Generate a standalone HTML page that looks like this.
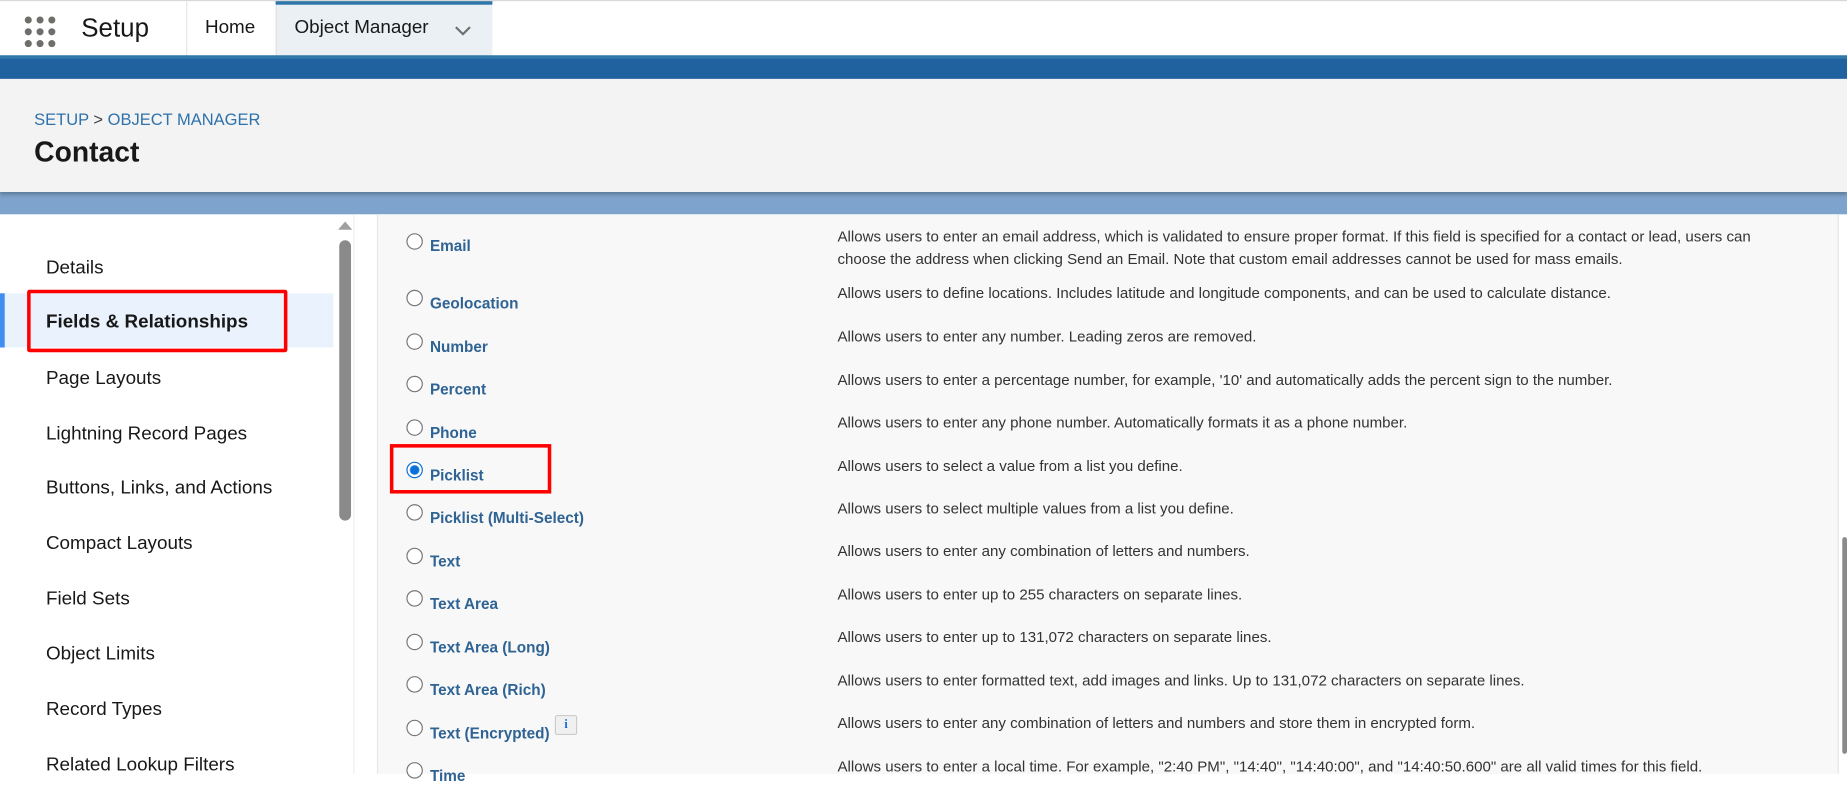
<!DOCTYPE html>
<html><head><meta charset="utf-8"><style>
html,body{margin:0;padding:0;width:1847px;height:774px;overflow:hidden;background:#fff}
#w{position:absolute;left:0;top:0;width:1568px;height:657px;transform:scale(1.17793);transform-origin:0 0;font-family:"Liberation Sans",Arial,sans-serif}
.a{position:absolute}
.nav{left:0;top:0;width:1568px;height:47px;background:#fff;border-top:1px solid #d8d8d8;box-sizing:border-box}
.dot{position:absolute;width:6px;height:6px;border-radius:50%;background:#706e6b}
.side{font-size:16px;color:#181818;left:39px;white-space:nowrap}
.lab{left:365px;font-size:13px;font-weight:bold;color:#2e6394;white-space:nowrap}
.desc{left:711px;font-size:12.8px;color:#333;line-height:19px;white-space:nowrap}
.rad{left:345px;width:12px;height:12px;border:1px solid #767676;border-radius:50%;background:#fff}
</style></head><body><div id="w">
<div class="a nav"></div>
<div class="dot" style="left:21px;top:14px"></div><div class="dot" style="left:31px;top:14px"></div><div class="dot" style="left:41px;top:14px"></div>
<div class="dot" style="left:21px;top:24px"></div><div class="dot" style="left:31px;top:24px"></div><div class="dot" style="left:41px;top:24px"></div>
<div class="dot" style="left:21px;top:34px"></div><div class="dot" style="left:31px;top:34px"></div><div class="dot" style="left:41px;top:34px"></div>
<div class="a" style="left:69px;top:11px;font-size:22px;color:#181818">Setup</div>
<div class="a" style="left:158px;top:1px;width:1px;height:46px;background:#e5e5e5"></div>
<div class="a" style="left:174px;top:15px;font-size:16px;color:#181818">Home</div>
<div class="a" style="left:234px;top:1px;width:184px;height:46px;background:#eaf0f4;border-left:1px solid #e0e0e0;box-sizing:border-box"></div>
<div class="a" style="left:234px;top:1px;width:184px;height:3px;background:#2e76a8"></div>
<div class="a" style="left:250px;top:15px;font-size:16px;color:#181818">Object Manager</div>
<svg class="a" style="left:385px;top:20px" width="16" height="12"><path d="M2 3 L8 9 L14 3" fill="none" stroke="#706e6b" stroke-width="1.8"/></svg>
<div class="a" style="left:0;top:47px;width:1568px;height:20px;background:#2061a0"></div>
<div class="a" style="left:0;top:47px;width:1568px;height:3px;background:#2f78a8"></div>
<div class="a" style="left:0;top:160px;width:1568px;height:22px;background:#7ea3cc"></div>
<div class="a" style="left:0;top:67px;width:1568px;height:96px;background:#f3f3f3;box-shadow:0 2px 3px rgba(0,0,0,.25)"></div>
<div class="a" style="left:29px;top:93px;font-size:14px;color:#2e72ab">SETUP <span style="color:#444">&gt;</span> OBJECT MANAGER</div>
<div class="a" style="left:29px;top:116px;font-size:24px;font-weight:bold;color:#181818">Contact</div>
<div class="a" style="left:0;top:182px;width:1568px;height:475px;background:#fff"></div>
<div class="a" style="left:0;top:249px;width:283px;height:46px;background:#eaf3fd"></div>
<div class="a" style="left:0;top:249px;width:4px;height:46px;background:#3f8ef0"></div>
<div class="a" style="left:23px;top:246px;width:221px;height:53px;border:3px solid #f00;box-sizing:border-box;border-radius:2px"></div>
<div class="a side" style="top:219px">Details</div>
<div class="a side" style="top:265px;font-weight:bold">Fields &amp; Relationships</div>
<div class="a side" style="top:313px">Page Layouts</div>
<div class="a side" style="top:360px">Lightning Record Pages</div>
<div class="a side" style="top:406px">Buttons, Links, and Actions</div>
<div class="a side" style="top:453px">Compact Layouts</div>
<div class="a side" style="top:500px">Field Sets</div>
<div class="a side" style="top:547px">Object Limits</div>
<div class="a side" style="top:594px">Record Types</div>
<div class="a side" style="top:641px">Related Lookup Filters</div>
<svg class="a" style="left:286px;top:186px" width="14" height="10"><path d="M1 9 L7 2 L13 9Z" fill="#a0a0a0"/></svg>
<div class="a" style="left:288px;top:204px;width:10px;height:238px;background:#8a8a8a;border-radius:5px"></div>
<div class="a" style="left:300px;top:182px;width:1px;height:475px;background:#eee"></div>
<div class="a" style="left:320px;top:182px;width:1240px;height:475px;background:#f8f8f8;border-left:1px solid #e6e6e6"></div>
<div class="a" style="left:1560px;top:182px;width:1px;height:475px;background:#e5e5e5"></div>
<div class="a" style="left:1564px;top:456px;width:4px;height:184px;background:#8a8a8a;border-radius:2px"></div>

<div class="a rad" style="top:198px"></div><div class="a lab" style="top:201px">Email</div>
<div class="a desc" style="top:191px">Allows users to enter an email address, which is validated to ensure proper format. If this field is specified for a contact or lead, users can<br>choose the address when clicking Send an Email. Note that custom email addresses cannot be used for mass emails.</div>
<div class="a rad" style="top:246px"></div><div class="a lab" style="top:250px">Geolocation</div>
<div class="a desc" style="top:239px">Allows users to define locations. Includes latitude and longitude components, and can be used to calculate distance.</div>
<div class="a rad" style="top:283px"></div><div class="a lab" style="top:287px">Number</div>
<div class="a desc" style="top:276px">Allows users to enter any number. Leading zeros are removed.</div>
<div class="a rad" style="top:319px"></div><div class="a lab" style="top:323px">Percent</div>
<div class="a desc" style="top:313px">Allows users to enter a percentage number, for example, '10' and automatically adds the percent sign to the number.</div>
<div class="a rad" style="top:356px"></div><div class="a lab" style="top:360px">Phone</div>
<div class="a desc" style="top:349px">Allows users to enter any phone number. Automatically formats it as a phone number.</div>
<div class="a rad" style="top:392px;border-color:#0b6fd8;background:radial-gradient(circle,#0b6fd8 0 3.5px,#fff 4.5px)"></div><div class="a lab" style="top:396px">Picklist</div>
<div class="a desc" style="top:386px">Allows users to select a value from a list you define.</div>
<div class="a" style="left:331px;top:377px;width:137px;height:42px;border:3px solid #f00;box-sizing:border-box"></div>
<div class="a rad" style="top:428px"></div><div class="a lab" style="top:432px">Picklist (Multi-Select)</div>
<div class="a desc" style="top:422px">Allows users to select multiple values from a list you define.</div>
<div class="a rad" style="top:465px"></div><div class="a lab" style="top:469px">Text</div>
<div class="a desc" style="top:458px">Allows users to enter any combination of letters and numbers.</div>
<div class="a rad" style="top:501px"></div><div class="a lab" style="top:505px">Text Area</div>
<div class="a desc" style="top:495px">Allows users to enter up to 255 characters on separate lines.</div>
<div class="a rad" style="top:538px"></div><div class="a lab" style="top:542px">Text Area (Long)</div>
<div class="a desc" style="top:531px">Allows users to enter up to 131,072 characters on separate lines.</div>
<div class="a rad" style="top:574px"></div><div class="a lab" style="top:578px">Text Area (Rich)</div>
<div class="a desc" style="top:568px">Allows users to enter formatted text, add images and links. Up to 131,072 characters on separate lines.</div>
<div class="a rad" style="top:611px"></div><div class="a lab" style="top:615px">Text (Encrypted)</div>
<div class="a" style="left:471px;top:607px;width:19px;height:17px;border:1px solid #ccc;border-radius:2px;background:#f0f0f0;box-sizing:border-box;font:bold 11px 'Liberation Serif',serif;color:#1a73d9;text-align:center;line-height:15px">i</div>
<div class="a desc" style="top:604px">Allows users to enter any combination of letters and numbers and store them in encrypted form.</div>
<div class="a rad" style="top:647px"></div><div class="a lab" style="top:651px">Time</div>
<div class="a desc" style="top:641px">Allows users to enter a local time. For example, "2:40 PM", "14:40", "14:40:00", and "14:40:50.600" are all valid times for this field.</div>
</div></body></html>
